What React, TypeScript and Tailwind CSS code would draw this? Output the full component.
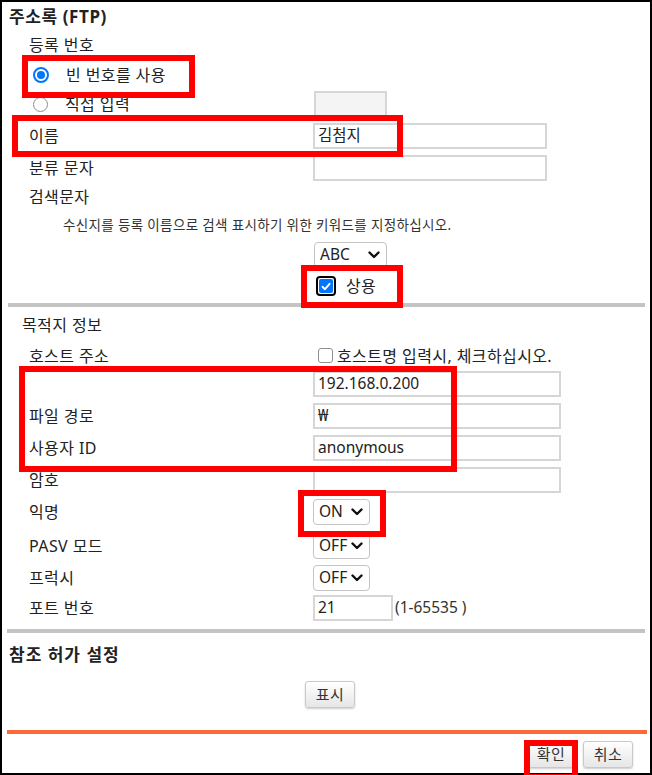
import React from "react";

const font = "font-['Noto_Sans','Noto_Sans_CJK_KR',sans-serif]";
const lbl = "text-[16px] tracking-[0.4px] text-[#222]";

function Radio({ checked }: { checked?: boolean }) {
  return checked ? (
    <span className="w-[16px] h-[16px] rounded-full border-2 border-[#0075ff] flex items-center justify-center bg-white">
      <span className="w-[8px] h-[8px] rounded-full bg-[#0075ff]" />
    </span>
  ) : (
    <span className="w-[15px] h-[15px] rounded-full border border-[#8f8f8f] bg-white" />
  );
}

function Chevron() {
  return (
    <svg width="12" height="8" viewBox="0 0 12 8" className="shrink-0">
      <path d="M1.5 1.5 L6 6 L10.5 1.5" fill="none" stroke="#111" strokeWidth="2.4" strokeLinecap="round" strokeLinejoin="round" />
    </svg>
  );
}

function Select({ value, w }: { value: string; w: string }) {
  return (
    <div className={`${w} h-[26px] border border-[#c4c4c4] rounded-[4px] bg-white flex items-center justify-between pl-[5px] pr-[6px] text-[15.5px] text-[#222]`}>
      <span>{value}</span>
      <Chevron />
    </div>
  );
}

function Input({ value, w, grey }: { value?: string; w: string; grey?: boolean }) {
  return (
    <div className={`${w} h-[26px] border-2 border-[#d6d6d6] ${grey ? "bg-[#f4f4f4]" : "bg-white"} flex items-center pl-[3px] text-[15.5px] text-[#222]`}>
      {value}
    </div>
  );
}

function Row({ label, h, children }: { label?: string; h: string; children?: React.ReactNode }) {
  return (
    <div className={`flex items-center ${h}`}>
      <div className={`w-[284px] ml-[27px] ${lbl}`}>{label}</div>
      {children}
    </div>
  );
}

function Btn({ label }: { label: string }) {
  return (
    <div className="w-[50px] h-[27px] rounded-[3px] border border-[#c9c9c9] bg-gradient-to-b from-white to-[#e6e6e6] shadow-[0_1px_2px_rgba(0,0,0,0.2)] flex items-center justify-center text-[15px] tracking-[0.5px] text-[#333]">
      {label}
    </div>
  );
}

function Box({ cls }: { cls: string }) {
  return <div className={`absolute border-[6px] border-[#ff0000] ${cls}`} />;
}

export default function App() {
  return (
    <div className={`relative w-[652px] h-[775px] bg-white overflow-hidden ${font}`}>
      <div className="h-full border-2 border-black">
        <div className="h-[30px] flex items-center pl-[7px] text-[17px] tracking-[0.6px] font-bold text-[#222]">주소록 (FTP)</div>
        <Row label="등록 번호" h="h-[26px]" />
        <div className={`h-[33px] flex items-center pl-[31px] gap-[17px] ${lbl}`}>
          <Radio checked />
          <span>빈 번호를 사용</span>
        </div>
        <div className="h-[26px] flex items-center">
          <div className={`w-[312px] flex items-center pl-[31px] gap-[17px] ${lbl}`}>
            <Radio />
            <span>직접 입력</span>
          </div>
          <Input w="w-[73px]" grey />
        </div>
        <div className="h-[3px]" />
        <Row label="이름" h="h-[32px]">
          <Input w="w-[234px]" value="김첨지" />
        </Row>
        <Row label="분류 문자" h="h-[32px]">
          <Input w="w-[234px]" />
        </Row>
        <Row label="검색문자" h="h-[26px]" />
        <div className="h-[30px] flex items-center pl-[61px] text-[13.5px] tracking-[0.35px] text-[#333]">
          수신지를 등록 이름으로 검색 표시하기 위한 키워드를 지정하십시오.
        </div>
        <div className="h-[30px] flex items-center pl-[312px]">
          <Select value="ABC" w="w-[73px]" />
        </div>
        <div className={`h-[32px] flex items-center pl-[314px] gap-[10px] ${lbl}`}>
          <span className="w-[20px] h-[20px] rounded-[4px] border-2 border-black flex items-center justify-center">
            <span className="w-[14px] h-[14px] rounded-[2px] bg-[#0075ff] flex items-center justify-center">
              <svg width="10" height="9" viewBox="0 0 10 9">
                <path d="M1.5 4.8 L4 7.2 L8.6 1.8" fill="none" stroke="white" strokeWidth="1.9" strokeLinecap="round" strokeLinejoin="round" />
              </svg>
            </span>
          </span>
          <span>상용</span>
        </div>
        <div className="h-[4px] mt-[1px] ml-[6px] w-[637px] bg-[#c4c4c4]" />
        <div className={`h-[36px] flex items-center pl-[20px] ${lbl}`}>목적지 정보</div>
        <div className="h-[25px] flex items-center">
          <div className={`w-[284px] ml-[27px] ${lbl}`}>호스트 주소</div>
          <div className={`flex items-center gap-[4px] pl-[5px] ${lbl}`}>
            <span className="w-[15px] h-[15px] rounded-[3px] border border-[#8f8f8f] bg-white" />
            <span>호스트명 입력시, 체크하십시오.</span>
          </div>
        </div>
        <Row h="h-[32px]">
          <Input w="w-[248px]" value="192.168.0.200" />
        </Row>
        <Row label="파일 경로" h="h-[32px]">
          <Input w="w-[248px]" value="₩" />
        </Row>
        <Row label="사용자 ID" h="h-[32px]">
          <Input w="w-[248px]" value="anonymous" />
        </Row>
        <Row label="암호" h="h-[32px]">
          <Input w="w-[248px]" />
        </Row>
        <Row label="익명" h="h-[32px]">
          <Select value="ON" w="w-[57px]" />
        </Row>
        <Row label="PASV 모드" h="h-[36px]">
          <Select value="OFF" w="w-[57px]" />
        </Row>
        <Row label="프럭시" h="h-[28px]">
          <Select value="OFF" w="w-[57px]" />
        </Row>
        <Row label="포트 번호" h="h-[32px]">
          <Input w="w-[80px]" value="21" />
          <span className="ml-[2px] text-[15.5px] text-[#333]">(1-65535 )</span>
        </Row>
        <div className="h-[4px] mt-[5px] ml-[5px] w-[638px] bg-[#c4c4c4]" />
        <div className="h-[44px] flex items-center pl-[7px] text-[17px] tracking-[1px] font-bold text-[#222]">참조 허가 설정</div>
        <div className="h-[34px] flex items-center pl-[303px]">
          <Btn label="표시" />
        </div>
        <div className="h-[4px] mt-[19px] ml-[5px] w-[640px] bg-[#fd6a38]" />
        <div className="flex justify-end gap-[7px] pr-[17px] mt-[7px]">
          <Btn label="확인" />
          <Btn label="취소" />
        </div>
      </div>

      {/* annotation boxes */}
      <Box cls="left-[22px] top-[55px] w-[173px] h-[43px]" />
      <Box cls="left-[12px] top-[115px] w-[391px] h-[42px]" />
      <Box cls="left-[301px] top-[265px] w-[102px] h-[43px]" />
      <Box cls="left-[19px] top-[366px] w-[438px] h-[106px]" />
      <Box cls="left-[298px] top-[490px] w-[88px] h-[47px]" />
      <Box cls="left-[524px] top-[740px] w-[54px] h-[40px]" />
    </div>
  );
}
